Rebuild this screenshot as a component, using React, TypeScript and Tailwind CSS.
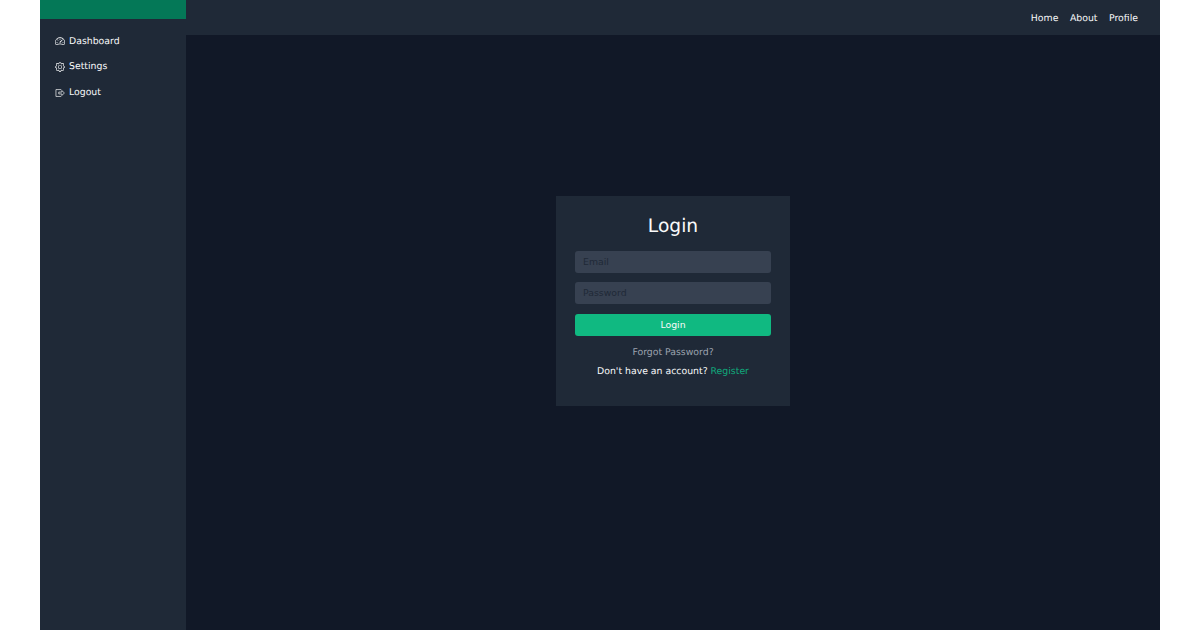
import { BsSpeedometer2, BsGear } from "react-icons/bs";

function LogoutIcon({ className }: { className?: string }) {
  return (
    <svg viewBox="0 0 16 16" fill="none" stroke="currentColor" strokeWidth="1.1" strokeLinejoin="round" className={className}>
      <path d="M10 2.5H1.5v11H10" />
      <path d="M6 6.5h5V4l4 4-4 4V9.5H6z" />
    </svg>
  );
}

const sideLinks = [
  { label: "Dashboard", Icon: BsSpeedometer2 },
  { label: "Settings", Icon: BsGear },
  { label: "Logout", Icon: LogoutIcon },
];

const topLinks = ["Home", "About", "Profile"];

export default function App() {
  return (
    <div className="h-[630px] overflow-hidden bg-white px-10 font-['DejaVu_Sans',sans-serif] text-[9.33px] text-[#f9fafb] [text-rendering:geometricPrecision]">
      <div className="flex h-full">
        <aside className="flex w-[146px] shrink-0 flex-col bg-[#1f2937]">
          <div className="h-[19px] bg-[#047857]" />
          <nav className="flex flex-col gap-[10px] px-[15px] pt-[15px]">
            {sideLinks.map(({ label, Icon }) => (
              <a key={label} className="flex h-[15.67px] items-center gap-1">
                <Icon className="mb-[1px] h-[10px] w-[10px]" />
                <span>{label}</span>
              </a>
            ))}
          </nav>
        </aside>
        <div className="flex min-w-0 flex-1 flex-col bg-[#111827]">
          <header className="flex h-[35px] items-center justify-end gap-[11.5px] bg-[#1f2937] pt-[2px] pr-[22px]">
            {topLinks.map((link) => (
              <a key={link}>{link}</a>
            ))}
          </header>
          <main className="flex flex-1 items-center justify-center pb-[63px]">
            <div className="flex h-[210px] w-[234px] flex-col bg-[#1f2937] px-[19px] pt-[17px]">
              <h1 className="text-center text-[18.67px] leading-[28px]">Login</h1>
              <input
                placeholder="Email"
                className="mt-[10px] h-[22px] rounded-[3px] bg-[#374151] px-2 pb-[2px] text-[9.33px] outline-none placeholder:text-[#1f2937]"
              />
              <input
                placeholder="Password"
                className="mt-[9px] h-[22px] rounded-[3px] bg-[#374151] px-2 pb-[2px] text-[9.33px] outline-none placeholder:text-[#1f2937]"
              />
              <button
                type="button"
                className="mt-[10px] h-[22px] rounded-[3px] bg-[#10b981] text-center text-[9.33px]"
              >
                Login
              </button>
              <p className="mt-[11px] text-center leading-[12px] text-[#9ca3af]">Forgot Password?</p>
              <p className="mt-[7px] text-center leading-[12px]">
                Don't have an account? <a className="text-[#10a97c]">Register</a>
              </p>
            </div>
          </main>
        </div>
      </div>
    </div>
  );
}
